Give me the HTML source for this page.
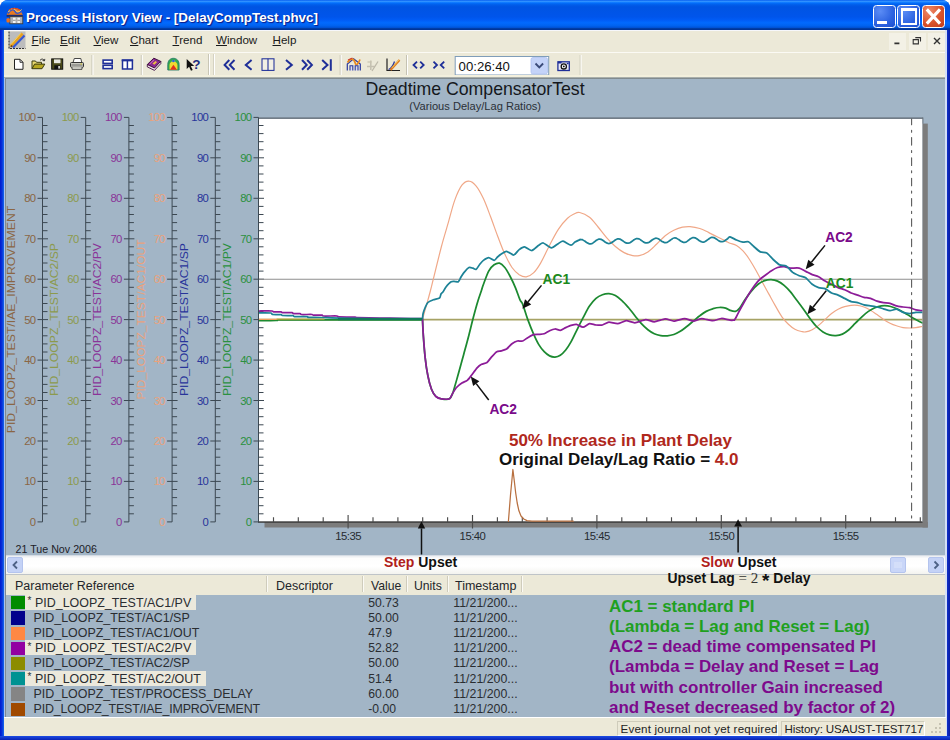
<!DOCTYPE html>
<html><head><meta charset="utf-8"><title>Process History View</title>
<style>
html,body{margin:0;padding:0;}
body{width:950px;height:740px;position:relative;overflow:hidden;background:#fff;font-family:"Liberation Sans",sans-serif;}
div{position:absolute;box-sizing:border-box;white-space:nowrap;}
#win{left:0;top:0;width:950px;height:740px;border-radius:8px 8px 0 0;overflow:hidden;background:linear-gradient(to right,#0019cf 0,#0831d9 2px,#166aee 4px,#166aee 946px,#0831d9 948px,#001ea0 950px);}
#title{left:0;top:0;width:950px;height:30.3px;background:linear-gradient(to bottom,#0058ee 0%,#3593ff 4%,#288eff 6%,#127dff 8%,#036ffc 10%,#0262ee 14%,#0057e5 20%,#0054e3 24%,#0055eb 56%,#005bf5 66%,#026afe 76%,#0062ef 86%,#0052d6 92%,#0040ab 94%,#003092 100%);}
#ttext{left:26px;top:9.5px;font-weight:bold;font-size:13.4px;color:#fff;letter-spacing:0px;text-shadow:1px 1px 1px #0a1883;}
.cap{top:5px;width:22.8px;height:22.8px;border-radius:3.5px;border:1px solid #fff;}
#bmin,#bmax{background:radial-gradient(circle at 30% 25%,#5b8cf5 0%,#2c62e0 60%,#1d4fcf 100%);}
#bclose{background:radial-gradient(circle at 30% 25%,#ee8a6a 0%,#d9532c 55%,#c23d1b 100%);}
#menubar{left:4px;top:30.3px;width:942px;height:21.7px;background:#ece9d8;border-top:1.2px solid #f6f7fb;}
.mi{top:32.9px;font-size:11.6px;color:#1a1a1a;}
.mi u{text-decoration:underline;}
#toolbar{left:4px;top:52px;width:942px;height:26px;background:#ece9d8;border-top:1px solid #fbfaf4;}
#tbline{left:4px;top:75px;width:942px;height:4.2px;background:linear-gradient(to bottom,#f3f0dd 0,#f3f0dd 2.3px,#858f92 2.6px,#7f898e 3.9px,#a2b5c6 4.2px);}
#chart{left:6px;top:79px;width:939px;height:477px;background:#a2b5c6;}
#lgrey{left:3.9px;top:78px;width:2.1px;height:639.2px;background:linear-gradient(to right,#a9c2ee 0,#a9c2ee 0.7px,#808a92 0.9px);}
#scroll{left:6px;top:555px;width:939px;height:18.5px;background:linear-gradient(to bottom,#c9d2dc 0,#eef0f3 1.5px,#fdfdfd 3.5px,#fff 60%,#f3f3ef 100%);}
.sbtn{top:557px;width:16px;height:16px;background:#c4d2f6;border:1px solid #b4c4ee;border-radius:2px;}
#thead{left:6px;top:573.5px;width:939px;height:21px;background:#ece9d8;border-top:1px solid #bfc4c8;}
.th{top:578.5px;font-size:12.5px;color:#23262a;}
.sep{top:576px;height:16px;background:#cfccbc;border-right:1px solid #fbfaf5;width:2px;}
#tbody{left:6px;top:594.5px;width:939px;height:122.8px;background:#a2b5c6;}
.sw{left:10.8px;width:14px;height:13.3px;margin-top:0.9px;}
.nm,.hl,.vl,.ts{font-size:12.45px;color:#2a2d31;height:15.2px;line-height:17px;overflow:visible;}
.nm{left:33.5px;}
.hl{left:25px;background:#ece9dc;padding:0 5px 0 10px;}
.ast{position:absolute;left:2.5px;top:-2.5px;font-size:10px;}
.vl{left:368.3px;font-size:12.2px;}
.ts{left:453.3px;font-size:12.35px;letter-spacing:0;}
#status{left:4px;top:717.2px;width:942px;height:19.5px;background:#ece9d8;border-top:1px solid #fff;}
.sbx{top:720.6px;height:15px;border:1px solid #cfccbb;border-right-color:#fff;border-bottom-color:#fff;font-size:11.6px;color:#222;line-height:13px;padding-left:3px;}
.ann{font-weight:bold;font-size:16.95px;left:609px;}
.g{color:#1fa01f;} .p{color:#7d0a8c;}
</style></head><body>
<div id="win">
<div id="title"></div>
<svg style="position:absolute;left:6px;top:7px" width="18" height="18" viewBox="0 0 18 18">
 <path d="M0.6,8 L3,2.5 Q8.5,-1 14,2.5 L16.8,8Z" fill="#e87a22"/>
 <path d="M2,6.5 C5,1.5 8,2 9,4.5 S13,7 16,3.5" stroke="#3858c8" stroke-width="1.5" fill="none"/>
 <path d="M2.5,5 C5,0.8 8,1 9.5,3.2 S13,5.5 15.5,2.5" stroke="#f8d870" stroke-width="1" fill="none"/>
 <path d="M3,3 Q8.5,-0.3 14,3" stroke="#d04028" stroke-width="1" fill="none"/>
 <rect x="0.6" y="7.8" width="16.2" height="2" fill="#1c2c70"/>
 <rect x="3.8" y="9.6" width="13" height="7.2" fill="#aeb0b4" stroke="#3c3c3c" stroke-width="0.9"/>
 <rect x="7" y="10.8" width="2.6" height="5.2" fill="#f4f4f4"/><rect x="11.4" y="10.8" width="2.6" height="5.2" fill="#f0f0f0"/>
 <path d="M7,13.300h2.600M11.4,13.300h2.6" stroke="#666" stroke-width="0.7"/>
 <rect x="0.5" y="11.2" width="3.3" height="4.2" rx="1" fill="#f07018"/>
</svg>
<div id="ttext">Process History View - [DelayCompTest.phvc]</div>
<div class="cap" id="bmin" style="left:872.8px"><div style="left:3.6px;top:15.2px;width:9.5px;height:3.2px;background:#fff"></div></div>
<div class="cap" id="bmax" style="left:897.4px"><div style="left:2.3px;top:2.2px;width:16.4px;height:16.4px;border:2.2px solid #fff;border-top-width:3.6px"></div></div>
<div class="cap" id="bclose" style="left:922.4px"><svg width="21" height="21" viewBox="0 0 21 21" style="position:absolute;left:0;top:0"><path d="M3.8,3.4L17,17.6M17,3.4L3.8,17.6" stroke="#fff" stroke-width="3.1" stroke-linecap="butt"/></svg></div>

<div id="menubar"></div>
<svg style="position:absolute;left:7.500px;top:31.300px" width="18" height="19" viewBox="0 0 18 19">
 <rect x="1" y="0.500" width="16.500" height="17" fill="#bcbcbc"/>
 <path d="M1,0.500V17.500H17.500" stroke="#333" stroke-width="1.100" fill="none" stroke-dasharray="2,1"/>
 <path d="M2.500,15.500L14.500,2.500" stroke="#e8a020" stroke-width="3.200"/>
 <path d="M3,13.500L13,2.200" stroke="#f4d860" stroke-width="1"/>
 <path d="M5,16.500L16.500,4.500" stroke="#3858d0" stroke-width="2.200"/>
 <path d="M2.200,16.200l1.500-2.300l1,1.300z" fill="#402010"/>
</svg>
<div class="mi" style="left:31.6px"><u>F</u>ile</div>
<div class="mi" style="left:60px"><u>E</u>dit</div>
<div class="mi" style="left:93.5px"><u>V</u>iew</div>
<div class="mi" style="left:130px"><u>C</u>hart</div>
<div class="mi" style="left:172.5px"><u>T</u>rend</div>
<div class="mi" style="left:216px"><u>W</u>indow</div>
<div class="mi" style="left:272.5px"><u>H</u>elp</div>
<svg style="position:absolute;left:885px;top:32px" width="60" height="18" viewBox="885 32 60 18">
 <rect x="889" y="33" width="17" height="17" fill="#f3f1e6"/><rect x="909" y="33" width="17" height="17" fill="#f3f1e6"/><rect x="928" y="33" width="17" height="17" fill="#f3f1e6"/>
 <path d="M894.4,43.3h5" stroke="#333" stroke-width="1.7"/>
 <path d="M915.3,37.6h5.2v4M913.2,39.6h5.2v4.3h-5.2z" stroke="#333" stroke-width="1.1" fill="none"/>
 <path d="M934,38l6,6M940,38l-6,6" stroke="#333" stroke-width="1.4"/>
</svg>

<div id="toolbar"></div>
<svg style="position:absolute;left:0;top:52px" width="950" height="26" viewBox="0 52 950 26"><path d="M14.5,59.300h5.500l3,3v7h-8.500z" fill="#fff" stroke="#222" stroke-width="1"/><path d="M20,59.300v3h3" fill="none" stroke="#222" stroke-width="0.900"/><path d="M32,68.700v-7.700h3.500l1,1.300h5v1.800" fill="#e8d870" stroke="#3a3a10" stroke-width="1"/><path d="M32,68.700l2.600-4.600h10.200l-2.800,4.600z" fill="#b8a820" stroke="#3a3a10" stroke-width="1"/><path d="M40,60.300c1.600-1.800,3.400-1.500,4.300,0.200m0.200,0.300l0.300-1.900m-0.300,1.900l-1.900-0.300" stroke="#222" stroke-width="0.900" fill="none"/><rect x="51.700" y="58.900" width="11" height="10.300" fill="#4a4a18" stroke="#111" stroke-width="1"/><rect x="54" y="59.400" width="6.500" height="3.800" fill="#e8e8e0"/><rect x="54.300" y="65.300" width="6" height="3.900" fill="#111"/><rect x="58.300" y="66" width="1.600" height="2.600" fill="#e8e8e0"/><path d="M73,62.500l1.300-4h6.500l1,4" fill="#fff" stroke="#333" stroke-width="0.900"/><rect x="70.500" y="62.500" width="13" height="4.800" rx="1" fill="#c8c8c0" stroke="#333" stroke-width="1"/><path d="M72,67.300v2h10v-2" fill="#e8e8e0" stroke="#333" stroke-width="0.900"/><path d="M71.500,65h11" stroke="#555" stroke-width="0.800"/><rect x="80.500" y="63.500" width="1.500" height="1" fill="#e0d020"/><path d="M92,55v20" stroke="#c5c2b2" stroke-width="1"/><path d="M93,55v20" stroke="#fff" stroke-width="1"/><path d="M141.3,55v20" stroke="#c5c2b2" stroke-width="1"/><path d="M142.3,55v20" stroke="#fff" stroke-width="1"/><path d="M340.2,55v20" stroke="#c5c2b2" stroke-width="1"/><path d="M341.2,55v20" stroke="#fff" stroke-width="1"/><path d="M406.5,55v20" stroke="#c5c2b2" stroke-width="1"/><path d="M407.5,55v20" stroke="#fff" stroke-width="1"/><path d="M208.500,54v22" stroke="#c9c6b6" stroke-width="1"/><path d="M209.500,54v22" stroke="#fff" stroke-width="1"/><path d="M213.500,54v22" stroke="#d5d2c2" stroke-width="1"/><path d="M214.500,54v22" stroke="#fff" stroke-width="1"/><path d="M581,55v20" stroke="#fff" stroke-width="1.200"/><path d="M580,55v20" stroke="#d5d2c2" stroke-width="1"/><rect x="103.100" y="60.100" width="9.100" height="3.300" fill="#fff" stroke="#1f2f98" stroke-width="1.600"/><rect x="103.100" y="65.300" width="9.100" height="3.300" fill="#fff" stroke="#1f2f98" stroke-width="1.600"/><rect x="122.500" y="60.400" width="9.900" height="8.600" fill="#fff" stroke="#1f2f98" stroke-width="1.500"/><path d="M121.700,60.200h11.400" stroke="#1f2f98" stroke-width="1.900"/><path d="M127.400,60.400v8.600" stroke="#1f2f98" stroke-width="1.500"/><path d="M147.300,64.500l6.500-6.300l7,3.200l-6.300,6.800z" fill="#8a2a90" stroke="#401040" stroke-width="1"/><path d="M147.300,64.500v2.400l7.200,3.500l6.300-6.800v-2.400l-6.300,6.800z" fill="#f0e0e8" stroke="#401040" stroke-width="0.900"/><path d="M152.500,63.500l3-2.500l1.500,1.200l-2.800,2.600z" fill="#f0c040"/><path d="M149.500,64.300l4.300-4.300" stroke="#d070c0" stroke-width="1"/><path d="M167.800,70v-5.500c0-4,2.600-6.200,5.600-6.200s5.700,2.200,5.700,6.200v5.500z" fill="#30a850" stroke="#2a7a6a" stroke-width="0.900"/><path d="M169.500,69.600v-4.600c0-2,1.700-3.800,3.900-3.800s4,1.800,4,3.800v4.600z" fill="#f0d830"/><path d="M170,69.800l3.400-5l3.600,5z" fill="#e03020"/><path d="M171.500,61.500a2.200,2.200 0 0 1 4,0z" fill="#70c8e8"/><circle cx="173.400" cy="61" r="1.200" fill="#3060d0"/><path d="M186.700,58.900v10l2.400-2.200l1.900,4l1.700-0.800l-1.900-4h3.400z" fill="#111"/><text x="192.300" y="68.600" font-family="Liberation Sans, sans-serif" font-weight="bold" font-size="13.500" fill="#1a2a80">?</text><path d="M229.300,60l-4.700,4.900l4.700,4.900M234.500,60l-4.700,4.900l4.700,4.900" stroke="#1f2f98" stroke-width="2" fill="none"/><path d="M251.600,60l-5.800,4.900l5.800,4.900" stroke="#1f2f98" stroke-width="2" fill="none"/><rect x="262" y="58.800" width="12" height="11.600" fill="#f1efe4" stroke="#1f2f98" stroke-width="1.050"/><path d="M268,58.800v11.600" stroke="#1f2f98" stroke-width="1.100"/><path d="M286,60l5.800,4.900l-5.800,4.900" stroke="#1f2f98" stroke-width="2" fill="none"/><path d="M302,60l4.700,4.900l-4.700,4.900M307.200,60l4.700,4.900l-4.700,4.900" stroke="#1f2f98" stroke-width="2" fill="none"/><path d="M322.200,60l5.300,4.900l-5.300,4.900M330.800,59.300v11.400" stroke="#1f2f98" stroke-width="2" fill="none"/><path d="M347.300,70.500v-6.500l6.300-5.200l6.700,5.200v6.500" fill="none" stroke="#2a3aa0" stroke-width="1.200"/><path d="M347.500,62.500c3-5,6.500-4,7.500,0s3,2,5-3" stroke="#e88a20" stroke-width="1.700" fill="none"/><path d="M350,70.500v-4.800h2.800v4.800m2.400,0v-4.800h2.800v4.800" stroke="#2a3aa0" stroke-width="1.100" fill="#dde"/><path d="M348,60l4.500-2" stroke="#d04030" stroke-width="1.200"/><path d="M367,66.500h7.500M370.800,60.500v9.500" stroke="#c4c0b0" stroke-width="1.500"/><path d="M372,71l6-9.500" stroke="#bcb8a8" stroke-width="1.300"/><path d="M367.500,62h4" stroke="#c8c4b0" stroke-width="1.200"/><path d="M387,58.500v12h13" stroke="#222" stroke-width="1.200" fill="none"/><path d="M388.500,69.500c3-1,5-5,6-8" stroke="#2a3aa0" stroke-width="1.300" fill="none"/><path d="M390.500,70l9-10" stroke="#e07a20" stroke-width="2.200"/><path d="M392,67.800l7-8" stroke="#f4d060" stroke-width="0.900"/><path d="M417,61.600l-3.500,3.400l3.500,3.400M420.200,61.600l3.500,3.400l-3.500,3.400" stroke="#1f2f98" stroke-width="1.800" fill="none"/><path d="M433.500,61.600l3.500,3.400l-3.500,3.400M444.200,61.600l-3.500,3.400l3.500,3.400" stroke="#1f2f98" stroke-width="1.800" fill="none"/><rect x="455.200" y="56.500" width="93.500" height="18.500" fill="#fff" stroke="#7f9db9" stroke-width="1"/><rect x="531" y="57.500" width="16.500" height="16.500" rx="2" fill="#c4d3f8" stroke="#b0c2f0" stroke-width="0.800"/><path d="M535.500,63.500l3.800,3.800l3.800-3.800" stroke="#3a4a78" stroke-width="1.900" fill="none"/><text x="458.600" y="71" font-family="Liberation Sans, sans-serif" font-size="13.200" fill="#111">00:26:40</text><rect x="557.900" y="61.800" width="11.400" height="8.700" fill="#e8e8f4" stroke="#1f2f98" stroke-width="1.300"/><circle cx="563.800" cy="66.400" r="2.600" fill="#fff" stroke="#111" stroke-width="1.300"/><circle cx="563.800" cy="66.400" r="0.900" fill="#111"/><path d="M558,62.500h3.600" stroke="#1f2f98" stroke-width="2"/><rect x="566.800" y="62.800" width="1.800" height="1.400" fill="#1f2f98"/></svg>
<div id="tbline"></div>
<div id="lgrey"></div>
<div style="left:944.8px;top:30px;width:2.3px;height:706.5px;background:#d4dff7"></div><div style="left:947px;top:30px;width:3px;height:710px;background:linear-gradient(to right,#1030c8,#0a1ca4)"></div>
<div id="chart"></div>
<div id="scroll"></div>
<div class="sbtn" style="left:7px"></div>
<div class="sbtn" style="left:928px"></div>
<div class="sbtn" style="left:890px;background:#c9d6f8"></div>
<svg style="position:absolute;left:0;top:556px" width="950" height="18" viewBox="0 556 950 18">
 <path d="M17,561.5l-3.5,3.5l3.5,3.5" stroke="#4d6185" stroke-width="1.8" fill="none"/>
 <path d="M934.5,561.5l3.5,3.5l-3.5,3.5" stroke="#4d6185" stroke-width="1.8" fill="none"/>
 <path d="M895,562v6M897,562v6M899,562v6M901,562v6" stroke="#dfe7fb" stroke-width="1"/>
</svg>
<div id="thead"></div>
<div class="th" style="left:15px">Parameter Reference</div>
<div class="th" style="left:276px">Descriptor</div>
<div class="th" style="left:371px;font-size:12.2px">Value</div>
<div class="th" style="left:414px;font-size:12.2px">Units</div>
<div class="th" style="left:455px">Timestamp</div>
<div class="sep" style="left:266px"></div><div class="sep" style="left:361.5px"></div><div class="sep" style="left:405.5px"></div><div class="sep" style="left:447px"></div><div class="sep" style="left:521px"></div>
<div id="tbody"></div>
<div class="sw" style="top:595.3px;background:#008c00"></div><div class="hl" style="top:594.5px"><span class="ast">*</span>PID_LOOPZ_TEST/AC1/PV</div><div class="vl" style="top:594.5px">50.73</div><div class="ts" style="top:594.5px">11/21/200...</div><div class="sw" style="top:610.5px;background:#00008c"></div><div class="nm" style="top:609.7px">PID_LOOPZ_TEST/AC1/SP</div><div class="vl" style="top:609.7px">50.00</div><div class="ts" style="top:609.7px">11/21/200...</div><div class="sw" style="top:625.7px;background:#ff8844"></div><div class="nm" style="top:624.9px">PID_LOOPZ_TEST/AC1/OUT</div><div class="vl" style="top:624.9px">47.9</div><div class="ts" style="top:624.9px">11/21/200...</div><div class="sw" style="top:640.9px;background:#9200a2"></div><div class="hl" style="top:640.1px"><span class="ast">*</span>PID_LOOPZ_TEST/AC2/PV</div><div class="vl" style="top:640.1px">52.82</div><div class="ts" style="top:640.1px">11/21/200...</div><div class="sw" style="top:656.1px;background:#8c8c00"></div><div class="nm" style="top:655.3px">PID_LOOPZ_TEST/AC2/SP</div><div class="vl" style="top:655.3px">50.00</div><div class="ts" style="top:655.3px">11/21/200...</div><div class="sw" style="top:671.3px;background:#009292"></div><div class="hl" style="top:670.5px"><span class="ast">*</span>PID_LOOPZ_TEST/AC2/OUT</div><div class="vl" style="top:670.5px">51.4</div><div class="ts" style="top:670.5px">11/21/200...</div><div class="sw" style="top:686.5px;background:#858585"></div><div class="nm" style="top:685.7px">PID_LOOPZ_TEST/PROCESS_DELAY</div><div class="vl" style="top:685.7px">60.00</div><div class="ts" style="top:685.7px">11/21/200...</div><div class="sw" style="top:701.7px;background:#a04a00"></div><div class="nm" style="top:700.9px;letter-spacing:-0.17px">PID_LOOPZ_TEST/IAE_IMPROVEMENT</div><div class="vl" style="top:700.9px">-0.00</div><div class="ts" style="top:700.9px">11/21/200...</div>
<div id="status"></div>
<div style="left:0;top:736.4px;width:950px;height:3.6px;background:linear-gradient(to bottom,#1c4ce4,#0a22b4)"></div>
<div class="sbx" style="left:616.5px;width:161.5px;letter-spacing:0.19px">Event journal not yet required</div>
<div class="sbx" style="left:780.5px;width:144.8px;letter-spacing:-0.13px">History: USAUST-TEST717</div>
<svg style="position:absolute;left:930px;top:722px" width="14" height="14" viewBox="0 0 14 14"><g fill="#c6c3b2"><rect x="9" y="9" width="2" height="2"/><rect x="5" y="9" width="2" height="2"/><rect x="9" y="5" width="2" height="2"/><rect x="1" y="9" width="2" height="2"/><rect x="5" y="5" width="2" height="2"/><rect x="9" y="1" width="2" height="2"/></g></svg>

<svg width="950" height="740" viewBox="0 0 950 740" style="position:absolute;left:0;top:0" font-family="Liberation Sans, sans-serif">
<rect x="259" y="118.5" width="663.5" height="403.5" fill="#ffffff"/>
<rect x="922.5" y="123.6" width="5.3" height="403.9" fill="#7c7c7c"/>
<rect x="264.5" y="522" width="663.3" height="5.5" fill="#7c7c7c"/><rect x="258" y="521.3" width="664.5" height="1.5" fill="#3c3c3c"/>
<rect x="259" y="117.5" width="664" height="1.3" fill="#5d6770"/><rect x="922.4" y="117.5" width="1" height="6.2" fill="#6a747c"/>
<path d="M42.5,117.4V521.9M37.5,521.9H42.5M42.5,513.8H47.5M42.5,505.7H47.5M42.5,497.6H47.5M42.5,489.5H47.5M37.5,481.4H48.0M42.5,473.4H47.5M42.5,465.3H47.5M42.5,457.2H47.5M42.5,449.1H47.5M37.5,441.0H48.0M42.5,432.9H47.5M42.5,424.8H47.5M42.5,416.7H47.5M42.5,408.6H47.5M37.5,400.5H48.0M42.5,392.5H47.5M42.5,384.4H47.5M42.5,376.3H47.5M42.5,368.2H47.5M37.5,360.1H48.0M42.5,352.0H47.5M42.5,343.9H47.5M42.5,335.8H47.5M42.5,327.7H47.5M37.5,319.6H48.0M42.5,311.6H47.5M42.5,303.5H47.5M42.5,295.4H47.5M42.5,287.3H47.5M37.5,279.2H48.0M42.5,271.1H47.5M42.5,263.0H47.5M42.5,254.9H47.5M42.5,246.8H47.5M37.5,238.8H48.0M42.5,230.7H47.5M42.5,222.6H47.5M42.5,214.5H47.5M42.5,206.4H47.5M37.5,198.3H48.0M42.5,190.2H47.5M42.5,182.1H47.5M42.5,174.0H47.5M42.5,165.9H47.5M37.5,157.8H48.0M42.5,149.8H47.5M42.5,141.7H47.5M42.5,133.6H47.5M42.5,125.5H47.5M37.5,117.4H42.5" stroke="#3c4852" stroke-width="1" fill="none"/>
<text x="35.3" y="525.9" font-size="11.3" text-anchor="end" fill="#8a6644" letter-spacing="-0.7">0</text>
<text x="35.3" y="485.4" font-size="11.3" text-anchor="end" fill="#8a6644" letter-spacing="-0.7">10</text>
<text x="35.3" y="445.0" font-size="11.3" text-anchor="end" fill="#8a6644" letter-spacing="-0.7">20</text>
<text x="35.3" y="404.5" font-size="11.3" text-anchor="end" fill="#8a6644" letter-spacing="-0.7">30</text>
<text x="35.3" y="364.1" font-size="11.3" text-anchor="end" fill="#8a6644" letter-spacing="-0.7">40</text>
<text x="35.3" y="323.6" font-size="11.3" text-anchor="end" fill="#8a6644" letter-spacing="-0.7">50</text>
<text x="35.3" y="283.2" font-size="11.3" text-anchor="end" fill="#8a6644" letter-spacing="-0.7">60</text>
<text x="35.3" y="242.8" font-size="11.3" text-anchor="end" fill="#8a6644" letter-spacing="-0.7">70</text>
<text x="35.3" y="202.3" font-size="11.3" text-anchor="end" fill="#8a6644" letter-spacing="-0.7">80</text>
<text x="35.3" y="161.8" font-size="11.3" text-anchor="end" fill="#8a6644" letter-spacing="-0.7">90</text>
<text x="35.3" y="121.4" font-size="11.3" text-anchor="end" fill="#8a6644" letter-spacing="-0.7">100</text>
<text transform="translate(14.9,319.5) rotate(-90)" font-size="11.3" text-anchor="middle" fill="#8a6644" textLength="227.5" lengthAdjust="spacingAndGlyphs">PID_LOOPZ_TEST/IAE_IMPROVEMENT</text>
<path d="M85.7,117.4V521.9M80.7,521.9H85.7M85.7,513.8H90.7M85.7,505.7H90.7M85.7,497.6H90.7M85.7,489.5H90.7M80.7,481.4H91.2M85.7,473.4H90.7M85.7,465.3H90.7M85.7,457.2H90.7M85.7,449.1H90.7M80.7,441.0H91.2M85.7,432.9H90.7M85.7,424.8H90.7M85.7,416.7H90.7M85.7,408.6H90.7M80.7,400.5H91.2M85.7,392.5H90.7M85.7,384.4H90.7M85.7,376.3H90.7M85.7,368.2H90.7M80.7,360.1H91.2M85.7,352.0H90.7M85.7,343.9H90.7M85.7,335.8H90.7M85.7,327.7H90.7M80.7,319.6H91.2M85.7,311.6H90.7M85.7,303.5H90.7M85.7,295.4H90.7M85.7,287.3H90.7M80.7,279.2H91.2M85.7,271.1H90.7M85.7,263.0H90.7M85.7,254.9H90.7M85.7,246.8H90.7M80.7,238.8H91.2M85.7,230.7H90.7M85.7,222.6H90.7M85.7,214.5H90.7M85.7,206.4H90.7M80.7,198.3H91.2M85.7,190.2H90.7M85.7,182.1H90.7M85.7,174.0H90.7M85.7,165.9H90.7M80.7,157.8H91.2M85.7,149.8H90.7M85.7,141.7H90.7M85.7,133.6H90.7M85.7,125.5H90.7M80.7,117.4H85.7" stroke="#3c4852" stroke-width="1" fill="none"/>
<text x="78.5" y="525.9" font-size="11.3" text-anchor="end" fill="#8c9a4c" letter-spacing="-0.7">0</text>
<text x="78.5" y="485.4" font-size="11.3" text-anchor="end" fill="#8c9a4c" letter-spacing="-0.7">10</text>
<text x="78.5" y="445.0" font-size="11.3" text-anchor="end" fill="#8c9a4c" letter-spacing="-0.7">20</text>
<text x="78.5" y="404.5" font-size="11.3" text-anchor="end" fill="#8c9a4c" letter-spacing="-0.7">30</text>
<text x="78.5" y="364.1" font-size="11.3" text-anchor="end" fill="#8c9a4c" letter-spacing="-0.7">40</text>
<text x="78.5" y="323.6" font-size="11.3" text-anchor="end" fill="#8c9a4c" letter-spacing="-0.7">50</text>
<text x="78.5" y="283.2" font-size="11.3" text-anchor="end" fill="#8c9a4c" letter-spacing="-0.7">60</text>
<text x="78.5" y="242.8" font-size="11.3" text-anchor="end" fill="#8c9a4c" letter-spacing="-0.7">70</text>
<text x="78.5" y="202.3" font-size="11.3" text-anchor="end" fill="#8c9a4c" letter-spacing="-0.7">80</text>
<text x="78.5" y="161.8" font-size="11.3" text-anchor="end" fill="#8c9a4c" letter-spacing="-0.7">90</text>
<text x="78.5" y="121.4" font-size="11.3" text-anchor="end" fill="#8c9a4c" letter-spacing="-0.7">100</text>
<text transform="translate(58.1,319.5) rotate(-90)" font-size="11.3" text-anchor="middle" fill="#8c9a4c" textLength="153" lengthAdjust="spacingAndGlyphs">PID_LOOPZ_TEST/AC2/SP</text>
<path d="M128.9,117.4V521.9M123.9,521.9H128.9M128.9,513.8H133.9M128.9,505.7H133.9M128.9,497.6H133.9M128.9,489.5H133.9M123.9,481.4H134.4M128.9,473.4H133.9M128.9,465.3H133.9M128.9,457.2H133.9M128.9,449.1H133.9M123.9,441.0H134.4M128.9,432.9H133.9M128.9,424.8H133.9M128.9,416.7H133.9M128.9,408.6H133.9M123.9,400.5H134.4M128.9,392.5H133.9M128.9,384.4H133.9M128.9,376.3H133.9M128.9,368.2H133.9M123.9,360.1H134.4M128.9,352.0H133.9M128.9,343.9H133.9M128.9,335.8H133.9M128.9,327.7H133.9M123.9,319.6H134.4M128.9,311.6H133.9M128.9,303.5H133.9M128.9,295.4H133.9M128.9,287.3H133.9M123.9,279.2H134.4M128.9,271.1H133.9M128.9,263.0H133.9M128.9,254.9H133.9M128.9,246.8H133.9M123.9,238.8H134.4M128.9,230.7H133.9M128.9,222.6H133.9M128.9,214.5H133.9M128.9,206.4H133.9M123.9,198.3H134.4M128.9,190.2H133.9M128.9,182.1H133.9M128.9,174.0H133.9M128.9,165.9H133.9M123.9,157.8H134.4M128.9,149.8H133.9M128.9,141.7H133.9M128.9,133.6H133.9M128.9,125.5H133.9M123.9,117.4H128.9" stroke="#3c4852" stroke-width="1" fill="none"/>
<text x="121.7" y="525.9" font-size="11.3" text-anchor="end" fill="#8a3498" letter-spacing="-0.7">0</text>
<text x="121.7" y="485.4" font-size="11.3" text-anchor="end" fill="#8a3498" letter-spacing="-0.7">10</text>
<text x="121.7" y="445.0" font-size="11.3" text-anchor="end" fill="#8a3498" letter-spacing="-0.7">20</text>
<text x="121.7" y="404.5" font-size="11.3" text-anchor="end" fill="#8a3498" letter-spacing="-0.7">30</text>
<text x="121.7" y="364.1" font-size="11.3" text-anchor="end" fill="#8a3498" letter-spacing="-0.7">40</text>
<text x="121.7" y="323.6" font-size="11.3" text-anchor="end" fill="#8a3498" letter-spacing="-0.7">50</text>
<text x="121.7" y="283.2" font-size="11.3" text-anchor="end" fill="#8a3498" letter-spacing="-0.7">60</text>
<text x="121.7" y="242.8" font-size="11.3" text-anchor="end" fill="#8a3498" letter-spacing="-0.7">70</text>
<text x="121.7" y="202.3" font-size="11.3" text-anchor="end" fill="#8a3498" letter-spacing="-0.7">80</text>
<text x="121.7" y="161.8" font-size="11.3" text-anchor="end" fill="#8a3498" letter-spacing="-0.7">90</text>
<text x="121.7" y="121.4" font-size="11.3" text-anchor="end" fill="#8a3498" letter-spacing="-0.7">100</text>
<text transform="translate(101.3,319.5) rotate(-90)" font-size="11.3" text-anchor="middle" fill="#8a3498" textLength="153" lengthAdjust="spacingAndGlyphs">PID_LOOPZ_TEST/AC2/PV</text>
<path d="M172.1,117.4V521.9M167.1,521.9H172.1M172.1,513.8H177.1M172.1,505.7H177.1M172.1,497.6H177.1M172.1,489.5H177.1M167.1,481.4H177.6M172.1,473.4H177.1M172.1,465.3H177.1M172.1,457.2H177.1M172.1,449.1H177.1M167.1,441.0H177.6M172.1,432.9H177.1M172.1,424.8H177.1M172.1,416.7H177.1M172.1,408.6H177.1M167.1,400.5H177.6M172.1,392.5H177.1M172.1,384.4H177.1M172.1,376.3H177.1M172.1,368.2H177.1M167.1,360.1H177.6M172.1,352.0H177.1M172.1,343.9H177.1M172.1,335.8H177.1M172.1,327.7H177.1M167.1,319.6H177.6M172.1,311.6H177.1M172.1,303.5H177.1M172.1,295.4H177.1M172.1,287.3H177.1M167.1,279.2H177.6M172.1,271.1H177.1M172.1,263.0H177.1M172.1,254.9H177.1M172.1,246.8H177.1M167.1,238.8H177.6M172.1,230.7H177.1M172.1,222.6H177.1M172.1,214.5H177.1M172.1,206.4H177.1M167.1,198.3H177.6M172.1,190.2H177.1M172.1,182.1H177.1M172.1,174.0H177.1M172.1,165.9H177.1M167.1,157.8H177.6M172.1,149.8H177.1M172.1,141.7H177.1M172.1,133.6H177.1M172.1,125.5H177.1M167.1,117.4H172.1" stroke="#3c4852" stroke-width="1" fill="none"/>
<text x="164.9" y="525.9" font-size="11.3" text-anchor="end" fill="#eba27c" letter-spacing="-0.7">0</text>
<text x="164.9" y="485.4" font-size="11.3" text-anchor="end" fill="#eba27c" letter-spacing="-0.7">10</text>
<text x="164.9" y="445.0" font-size="11.3" text-anchor="end" fill="#eba27c" letter-spacing="-0.7">20</text>
<text x="164.9" y="404.5" font-size="11.3" text-anchor="end" fill="#eba27c" letter-spacing="-0.7">30</text>
<text x="164.9" y="364.1" font-size="11.3" text-anchor="end" fill="#eba27c" letter-spacing="-0.7">40</text>
<text x="164.9" y="323.6" font-size="11.3" text-anchor="end" fill="#eba27c" letter-spacing="-0.7">50</text>
<text x="164.9" y="283.2" font-size="11.3" text-anchor="end" fill="#eba27c" letter-spacing="-0.7">60</text>
<text x="164.9" y="242.8" font-size="11.3" text-anchor="end" fill="#eba27c" letter-spacing="-0.7">70</text>
<text x="164.9" y="202.3" font-size="11.3" text-anchor="end" fill="#eba27c" letter-spacing="-0.7">80</text>
<text x="164.9" y="161.8" font-size="11.3" text-anchor="end" fill="#eba27c" letter-spacing="-0.7">90</text>
<text x="164.9" y="121.4" font-size="11.3" text-anchor="end" fill="#eba27c" letter-spacing="-0.7">100</text>
<text transform="translate(144.5,319.5) rotate(-90)" font-size="11.3" text-anchor="middle" fill="#eba27c" textLength="160" lengthAdjust="spacingAndGlyphs">PID_LOOPZ_TEST/AC1/OUT</text>
<path d="M215.3,117.4V521.9M210.3,521.9H215.3M215.3,513.8H220.3M215.3,505.7H220.3M215.3,497.6H220.3M215.3,489.5H220.3M210.3,481.4H220.8M215.3,473.4H220.3M215.3,465.3H220.3M215.3,457.2H220.3M215.3,449.1H220.3M210.3,441.0H220.8M215.3,432.9H220.3M215.3,424.8H220.3M215.3,416.7H220.3M215.3,408.6H220.3M210.3,400.5H220.8M215.3,392.5H220.3M215.3,384.4H220.3M215.3,376.3H220.3M215.3,368.2H220.3M210.3,360.1H220.8M215.3,352.0H220.3M215.3,343.9H220.3M215.3,335.8H220.3M215.3,327.7H220.3M210.3,319.6H220.8M215.3,311.6H220.3M215.3,303.5H220.3M215.3,295.4H220.3M215.3,287.3H220.3M210.3,279.2H220.8M215.3,271.1H220.3M215.3,263.0H220.3M215.3,254.9H220.3M215.3,246.8H220.3M210.3,238.8H220.8M215.3,230.7H220.3M215.3,222.6H220.3M215.3,214.5H220.3M215.3,206.4H220.3M210.3,198.3H220.8M215.3,190.2H220.3M215.3,182.1H220.3M215.3,174.0H220.3M215.3,165.9H220.3M210.3,157.8H220.8M215.3,149.8H220.3M215.3,141.7H220.3M215.3,133.6H220.3M215.3,125.5H220.3M210.3,117.4H215.3" stroke="#3c4852" stroke-width="1" fill="none"/>
<text x="208.10000000000002" y="525.9" font-size="11.3" text-anchor="end" fill="#28349a" letter-spacing="-0.7">0</text>
<text x="208.10000000000002" y="485.4" font-size="11.3" text-anchor="end" fill="#28349a" letter-spacing="-0.7">10</text>
<text x="208.10000000000002" y="445.0" font-size="11.3" text-anchor="end" fill="#28349a" letter-spacing="-0.7">20</text>
<text x="208.10000000000002" y="404.5" font-size="11.3" text-anchor="end" fill="#28349a" letter-spacing="-0.7">30</text>
<text x="208.10000000000002" y="364.1" font-size="11.3" text-anchor="end" fill="#28349a" letter-spacing="-0.7">40</text>
<text x="208.10000000000002" y="323.6" font-size="11.3" text-anchor="end" fill="#28349a" letter-spacing="-0.7">50</text>
<text x="208.10000000000002" y="283.2" font-size="11.3" text-anchor="end" fill="#28349a" letter-spacing="-0.7">60</text>
<text x="208.10000000000002" y="242.8" font-size="11.3" text-anchor="end" fill="#28349a" letter-spacing="-0.7">70</text>
<text x="208.10000000000002" y="202.3" font-size="11.3" text-anchor="end" fill="#28349a" letter-spacing="-0.7">80</text>
<text x="208.10000000000002" y="161.8" font-size="11.3" text-anchor="end" fill="#28349a" letter-spacing="-0.7">90</text>
<text x="208.10000000000002" y="121.4" font-size="11.3" text-anchor="end" fill="#28349a" letter-spacing="-0.7">100</text>
<text transform="translate(187.7,319.5) rotate(-90)" font-size="11.3" text-anchor="middle" fill="#28349a" textLength="153" lengthAdjust="spacingAndGlyphs">PID_LOOPZ_TEST/AC1/SP</text>
<path d="M258.5,117.4V521.9M253.5,521.9H258.5M258.5,513.8H263.5M258.5,505.7H263.5M258.5,497.6H263.5M258.5,489.5H263.5M253.5,481.4H264.0M258.5,473.4H263.5M258.5,465.3H263.5M258.5,457.2H263.5M258.5,449.1H263.5M253.5,441.0H264.0M258.5,432.9H263.5M258.5,424.8H263.5M258.5,416.7H263.5M258.5,408.6H263.5M253.5,400.5H264.0M258.5,392.5H263.5M258.5,384.4H263.5M258.5,376.3H263.5M258.5,368.2H263.5M253.5,360.1H264.0M258.5,352.0H263.5M258.5,343.9H263.5M258.5,335.8H263.5M258.5,327.7H263.5M253.5,319.6H264.0M258.5,311.6H263.5M258.5,303.5H263.5M258.5,295.4H263.5M258.5,287.3H263.5M253.5,279.2H264.0M258.5,271.1H263.5M258.5,263.0H263.5M258.5,254.9H263.5M258.5,246.8H263.5M253.5,238.8H264.0M258.5,230.7H263.5M258.5,222.6H263.5M258.5,214.5H263.5M258.5,206.4H263.5M253.5,198.3H264.0M258.5,190.2H263.5M258.5,182.1H263.5M258.5,174.0H263.5M258.5,165.9H263.5M253.5,157.8H264.0M258.5,149.8H263.5M258.5,141.7H263.5M258.5,133.6H263.5M258.5,125.5H263.5M253.5,117.4H258.5" stroke="#3c4852" stroke-width="1" fill="none"/>
<text x="251.3" y="525.9" font-size="11.3" text-anchor="end" fill="#2a9040" letter-spacing="-0.7">0</text>
<text x="251.3" y="485.4" font-size="11.3" text-anchor="end" fill="#2a9040" letter-spacing="-0.7">10</text>
<text x="251.3" y="445.0" font-size="11.3" text-anchor="end" fill="#2a9040" letter-spacing="-0.7">20</text>
<text x="251.3" y="404.5" font-size="11.3" text-anchor="end" fill="#2a9040" letter-spacing="-0.7">30</text>
<text x="251.3" y="364.1" font-size="11.3" text-anchor="end" fill="#2a9040" letter-spacing="-0.7">40</text>
<text x="251.3" y="323.6" font-size="11.3" text-anchor="end" fill="#2a9040" letter-spacing="-0.7">50</text>
<text x="251.3" y="283.2" font-size="11.3" text-anchor="end" fill="#2a9040" letter-spacing="-0.7">60</text>
<text x="251.3" y="242.8" font-size="11.3" text-anchor="end" fill="#2a9040" letter-spacing="-0.7">70</text>
<text x="251.3" y="202.3" font-size="11.3" text-anchor="end" fill="#2a9040" letter-spacing="-0.7">80</text>
<text x="251.3" y="161.8" font-size="11.3" text-anchor="end" fill="#2a9040" letter-spacing="-0.7">90</text>
<text x="251.3" y="121.4" font-size="11.3" text-anchor="end" fill="#2a9040" letter-spacing="-0.7">100</text>
<text transform="translate(230.9,319.5) rotate(-90)" font-size="11.3" text-anchor="middle" fill="#2a9040" textLength="153" lengthAdjust="spacingAndGlyphs">PID_LOOPZ_TEST/AC1/PV</text>
<path d="M273.5,517.3V522M298.3,517.3V522M323.2,517.3V522M348.1,515V528.5M373.0,517.3V522M397.9,517.3V522M422.7,517.3V522M447.6,517.3V522M472.5,515V528.5M497.4,517.3V522M522.3,517.3V522M547.1,517.3V522M572.0,517.3V522M596.9,515V528.5M621.8,517.3V522M646.7,517.3V522M671.5,517.3V522M696.4,517.3V522M721.3,515V528.5M746.2,517.3V522M771.1,517.3V522M795.9,517.3V522M820.8,517.3V522M845.7,515V528.5M870.6,517.3V522M895.5,517.3V522M920.3,517.3V522" stroke="#4c4c4c" stroke-width="1.15" fill="none"/>
<text x="348.1" y="539.5" font-size="11.3" text-anchor="middle" fill="#262b30" letter-spacing="-0.5">15:35</text>
<text x="472.5" y="539.5" font-size="11.3" text-anchor="middle" fill="#262b30" letter-spacing="-0.5">15:40</text>
<text x="596.9" y="539.5" font-size="11.3" text-anchor="middle" fill="#262b30" letter-spacing="-0.5">15:45</text>
<text x="721.3" y="539.5" font-size="11.3" text-anchor="middle" fill="#262b30" letter-spacing="-0.5">15:50</text>
<text x="845.7" y="539.5" font-size="11.3" text-anchor="middle" fill="#262b30" letter-spacing="-0.5">15:55</text>
<clipPath id="pc"><rect x="259" y="118.5" width="663.5" height="403.5"/></clipPath>
<g clip-path="url(#pc)" fill="none" stroke-linejoin="round" stroke-linecap="round">
<path d="M259,279.2H922.5" stroke="#8e8e8e" stroke-width="1.050"/>
<path d="M259,319.6H922.5" stroke="#a6a264" stroke-width="1.7"/>
<path d="M508.4,521.5L510.5,495.0L512.9,469.5L514.3,481.0L515.7,493.0L517.2,503.0L518.9,510.8L521.0,516.0L523.8,519.0L527.0,520.6L531.9,521.2L573.3,521.2" stroke="#b87040" stroke-width="1.25"/>
<path d="M260.0,320.5C263.3,320.4 273.3,320.1 280.0,320.0C286.7,319.9 276.2,319.7 300.0,319.6C323.8,319.5 402.1,319.5 422.5,319.5C422.8,318.2 423.8,314.7 424.5,312.0C425.2,309.3 426.0,307.1 427.0,303.4C428.0,299.7 429.6,294.0 430.6,290.0C431.7,286.0 431.5,286.4 433.3,279.2C435.1,272.0 438.8,256.6 441.3,247.0C443.8,237.4 446.3,229.7 448.5,221.9C450.7,214.1 452.5,206.5 454.7,200.4C456.9,194.3 459.5,188.4 461.9,185.2C464.3,182.0 466.7,180.9 469.1,181.1C471.5,181.2 473.8,183.2 476.2,186.1C478.6,189.0 481.0,193.5 483.4,198.6C485.8,203.7 488.1,210.2 490.5,216.5C492.9,222.8 495.3,229.9 497.7,236.2C500.1,242.5 502.4,248.9 504.8,254.1C507.2,259.3 509.6,264.1 512.0,267.5C514.4,270.9 516.8,273.1 519.2,274.7C521.6,276.2 523.9,277.1 526.3,276.8C528.7,276.5 531.1,275.2 533.5,272.9C535.9,270.6 537.9,267.7 540.6,263.1C543.3,258.5 546.6,250.9 549.6,245.2C552.6,239.5 555.5,233.6 558.5,229.1C561.5,224.6 564.9,220.8 567.5,218.3C570.1,215.8 572.0,215.0 574.0,214.0C576.0,213.0 577.1,211.9 579.7,212.5C582.3,213.1 586.4,214.9 589.5,217.3C592.6,219.7 595.2,223.6 598.1,227.0C601.0,230.4 603.9,234.6 606.8,237.8C609.7,241.1 612.5,244.0 615.4,246.5C618.3,249.0 621.2,251.1 624.1,252.6C627.0,254.1 630.2,255.1 632.7,255.6C635.2,256.1 636.7,256.2 639.2,255.6C641.7,255.0 645.0,253.8 647.9,251.9C650.8,250.0 653.6,247.0 656.5,244.3C659.4,241.6 662.3,238.0 665.2,235.7C668.1,233.4 670.9,231.7 673.8,230.3C676.7,228.9 679.8,227.8 682.5,227.2C685.2,226.6 687.1,226.4 690.0,226.6C692.9,226.8 696.7,227.5 699.8,228.5C702.9,229.5 705.5,231.0 708.4,232.4C711.3,233.8 714.2,235.4 717.1,236.8C720.0,238.2 723.6,240.0 725.7,241.1C727.9,242.2 728.2,242.5 730.0,243.2C731.8,243.9 734.3,244.1 736.5,245.4C738.7,246.7 740.8,248.5 743.0,250.8C745.2,253.2 747.4,256.2 749.5,259.5C751.6,262.8 753.8,266.5 755.9,270.3C758.0,274.1 760.2,278.2 762.4,282.2C764.6,286.2 766.7,290.2 768.9,294.1C771.1,298.1 773.2,302.1 775.4,305.9C777.6,309.7 779.7,313.7 781.9,316.8C784.1,319.9 786.2,322.2 788.4,324.3C790.6,326.4 792.7,328.1 794.9,329.3C797.1,330.5 799.6,331.1 801.4,331.5C803.2,331.9 803.9,332.2 805.7,331.9C807.5,331.6 810.1,330.8 812.2,329.7C814.4,328.6 816.5,327.1 818.6,325.4C820.8,323.7 822.9,321.4 825.1,319.4C827.3,317.4 829.4,315.2 831.6,313.5C833.8,311.8 835.9,310.3 838.1,309.2C840.3,308.1 842.4,307.2 844.6,306.6C846.8,306.0 848.9,305.5 851.1,305.3C853.3,305.1 855.5,305.0 857.6,305.3C859.8,305.6 861.9,306.2 864.0,307.0C866.1,307.8 868.3,309.0 870.5,310.3C872.7,311.6 874.8,313.1 877.0,314.6C879.2,316.1 881.3,318.0 883.5,319.4C885.7,320.8 887.8,322.1 890.0,323.2C892.2,324.3 894.3,325.1 896.5,325.8C898.7,326.5 900.8,327.2 903.0,327.6C905.2,328.0 907.4,328.0 909.5,328.0C911.6,328.0 913.8,327.9 915.9,327.6C918.0,327.4 921.0,326.7 922.0,326.5" stroke="#f0a888" stroke-width="1.2"/>
<path d="M259.0,320.5C261.8,320.5 272.7,320.6 276.0,320.5C279.3,320.4 275.0,320.0 279.0,319.9C283.0,319.8 291.5,319.8 300.0,319.8C308.5,319.8 309.6,319.8 330.0,319.8C350.4,319.8 407.1,319.8 422.5,319.8C422.6,322.6 422.9,330.1 423.4,336.5C423.8,342.9 424.4,351.4 425.2,358.0C425.9,364.6 426.8,370.7 427.9,375.9C428.9,381.1 430.2,385.9 431.5,389.3C432.8,392.7 434.3,394.9 435.9,396.5C437.5,398.1 439.1,398.4 441.3,398.8C443.6,399.2 447.4,399.9 449.4,398.8C451.3,397.8 452.4,393.6 453.0,392.5C453.9,389.4 456.5,380.5 458.3,374.1C460.1,367.8 461.9,361.0 463.7,354.4C465.5,347.8 467.4,341.0 469.0,334.7C470.6,328.4 472.0,322.5 473.5,316.8C475.0,311.1 476.6,305.2 478.0,300.7C479.4,296.2 480.7,292.7 481.6,290.0C482.5,287.3 482.2,287.6 483.4,284.5C484.6,281.4 486.9,274.4 488.7,271.1C490.5,267.8 492.3,266.1 494.1,264.8C495.9,263.5 497.7,262.7 499.5,263.1C501.3,263.6 503.0,265.3 504.8,267.5C506.6,269.7 508.4,273.1 510.2,276.5C512.0,279.9 514.0,284.2 515.6,288.1C517.2,292.0 518.8,297.2 520.0,299.9C521.2,302.6 521.4,300.9 522.7,304.3C524.1,307.7 526.3,315.5 528.1,320.4C529.9,325.3 531.7,329.8 533.5,333.8C535.3,337.8 537.0,341.6 538.8,344.6C540.6,347.6 542.4,349.8 544.2,351.7C546.0,353.6 547.8,355.0 549.6,355.9C551.4,356.8 553.2,357.2 555.0,357.1C556.8,357.0 558.5,356.5 560.3,355.3C562.1,354.1 563.9,352.2 565.7,350.0C567.5,347.8 569.2,345.1 571.0,341.9C572.8,338.7 574.5,334.8 576.5,330.8C578.5,326.8 580.8,322.0 583.0,317.9C585.2,313.8 587.3,309.2 589.5,306.0C591.7,302.8 593.9,300.3 596.0,298.4C598.1,296.5 600.2,295.5 602.4,294.7C604.5,293.9 606.7,293.5 608.9,293.6C611.1,293.8 613.2,294.4 615.4,295.6C617.6,296.8 619.7,298.6 621.9,300.6C624.1,302.6 626.2,305.0 628.4,307.5C630.6,310.0 632.7,313.0 634.9,315.7C637.1,318.4 639.2,321.3 641.4,323.7C643.6,326.1 645.8,328.1 647.9,329.8C650.0,331.5 652.1,332.7 654.3,333.7C656.4,334.7 658.6,335.2 660.8,335.6C663.0,336.0 665.1,336.0 667.3,335.8C669.5,335.6 671.6,335.2 673.8,334.5C676.0,333.8 678.1,332.6 680.3,331.3C682.5,330.0 684.6,328.2 686.8,326.5C689.0,324.8 691.1,322.9 693.3,321.1C695.5,319.3 697.6,317.3 699.8,315.7C701.9,314.1 704.1,312.5 706.2,311.4C708.4,310.2 710.5,309.4 712.7,308.8C714.9,308.2 717.0,307.6 719.2,307.5C721.4,307.4 723.9,307.6 725.7,308.1C727.5,308.6 728.4,309.8 730.0,310.3C731.6,310.9 733.8,311.8 735.4,311.4C737.0,311.0 738.1,310.1 739.7,308.1C741.3,306.1 743.1,302.4 745.1,299.5C747.1,296.6 749.4,293.3 751.6,290.8C753.8,288.3 755.9,286.0 758.1,284.3C760.3,282.6 762.4,281.4 764.6,280.6C766.8,279.8 768.9,279.5 771.1,279.6C773.3,279.7 775.4,280.1 777.6,281.1C779.8,282.1 782.0,283.6 784.1,285.4C786.2,287.2 788.4,289.4 790.5,291.9C792.6,294.4 794.8,297.6 797.0,300.5C799.2,303.4 801.3,306.2 803.5,309.2C805.7,312.2 807.8,315.6 810.0,318.5C812.2,321.4 814.3,324.3 816.5,326.5C818.7,328.7 820.8,330.5 823.0,331.9C825.2,333.3 827.4,334.3 829.5,334.9C831.6,335.5 833.8,335.7 835.9,335.6C838.0,335.5 840.2,335.1 842.4,334.1C844.6,333.1 846.7,331.5 848.9,329.7C851.1,327.9 853.2,325.3 855.4,323.2C857.6,321.1 859.7,318.8 861.9,316.8C864.1,314.8 866.2,312.9 868.4,311.4C870.6,309.9 872.7,308.6 874.9,307.7C877.1,306.8 879.2,306.2 881.4,305.9C883.5,305.6 885.6,305.6 887.8,305.9C889.9,306.2 892.1,306.9 894.3,307.7C896.5,308.5 898.6,309.5 900.8,310.7C903.0,311.9 905.1,313.3 907.3,314.6C909.5,315.9 911.3,317.1 913.8,318.5C916.2,319.9 920.6,322.1 922.0,322.8" stroke="#1c8a30" stroke-width="1.75"/>
<path d="M259,319.3H277" stroke="#f0a060" stroke-width="1.2"/><path d="M277,319.2H324" stroke="#b8a838" stroke-width="1.2"/>
<path d="M259.0,311.0C260.3,311.0 270.6,310.9 272.0,311.0C273.4,311.1 272.6,311.7 273.5,311.8C274.4,311.9 280.1,311.7 281.0,311.8C281.9,311.9 281.4,312.6 282.5,312.7C283.6,312.8 290.9,312.6 292.0,312.7C293.1,312.8 292.7,313.6 293.5,313.7C294.3,313.8 299.2,313.6 300.0,313.7C300.8,313.8 300.3,314.4 301.5,314.5C302.7,314.6 310.8,314.4 312.0,314.5C313.2,314.6 312.5,315.1 313.5,315.2C314.5,315.3 321.0,315.1 322.0,315.2C323.0,315.3 322.0,315.9 323.5,316.0C325.0,316.1 335.5,315.9 337.0,316.0C338.5,316.1 336.7,316.8 338.5,316.9C340.3,317.0 353.1,317.0 355.0,317.1C356.9,317.2 354.5,317.6 357.0,317.7C359.5,317.8 375.7,318.0 380.0,318.1C384.3,318.2 395.8,318.3 400.0,318.4C404.2,318.5 420.2,318.7 422.5,318.7C422.6,320.5 423.1,332.6 423.4,336.5C423.7,340.4 424.8,354.1 425.2,358.0C425.6,361.9 427.3,372.8 427.9,375.9C428.5,379.0 430.7,387.2 431.5,389.3C432.3,391.4 434.9,395.6 435.9,396.5C436.9,397.4 439.9,398.6 441.3,398.8C442.7,399.0 448.2,399.4 449.4,398.8C450.6,398.2 452.2,394.0 452.9,392.9C453.6,391.8 455.6,388.5 456.5,387.5C457.4,386.5 460.8,383.7 461.9,383.0C463.0,382.3 466.3,381.2 467.3,380.4C468.3,379.6 470.7,376.3 471.7,375.0C472.7,373.7 476.1,368.9 477.1,367.8C478.1,366.7 480.6,364.8 481.6,364.3C482.6,363.8 486.0,363.2 487.0,362.5C488.0,361.8 490.4,358.2 491.4,357.1C492.4,356.0 495.8,352.3 496.8,351.7C497.8,351.1 500.3,351.1 501.3,350.8C502.3,350.5 505.5,349.7 506.6,349.0C507.7,348.3 510.9,344.5 512.0,343.7C513.1,342.9 516.3,341.3 517.4,341.0C518.5,340.7 521.6,341.4 522.7,341.0C523.8,340.6 527.0,338.0 528.1,337.4C529.2,336.8 532.4,335.0 533.5,334.7C534.6,334.4 537.7,334.5 538.8,334.4C539.9,334.3 543.1,334.2 544.2,333.8C545.3,333.4 548.5,331.3 549.6,330.8C550.7,330.3 553.9,329.1 555.0,329.0C556.1,328.9 559.2,330.4 560.3,330.3C561.4,330.2 564.6,328.1 565.7,327.6C566.8,327.1 569.9,325.7 571.0,325.4C572.1,325.1 575.3,324.2 576.5,324.4C577.7,324.6 581.7,327.3 583.0,327.2C584.3,327.1 588.2,323.9 589.5,323.7C590.8,323.5 594.7,324.9 596.0,325.0C597.3,325.1 601.1,325.3 602.4,325.0C603.7,324.7 607.4,322.3 608.9,322.2C610.4,322.1 615.9,323.8 617.6,323.7C619.3,323.6 624.5,320.8 626.2,320.7C627.9,320.6 632.9,322.9 634.9,322.8C636.9,322.7 643.8,319.7 645.7,319.6C647.6,319.5 652.3,321.9 654.3,321.8C656.2,321.7 663.2,319.0 665.2,318.9C667.2,318.8 671.9,321.1 673.8,321.1C675.7,321.1 682.6,318.5 684.6,318.5C686.6,318.5 691.6,321.1 693.3,321.1C695.0,321.1 700.0,318.5 701.9,318.5C703.8,318.5 710.8,320.7 712.7,320.7C714.7,320.7 719.7,318.6 721.4,318.5C723.1,318.4 728.7,320.0 730.0,320.2C731.3,320.4 733.9,320.2 734.3,320.2C734.5,319.9 735.6,318.3 736.0,317.5C736.4,316.7 737.7,314.1 738.6,312.4C739.5,310.7 743.8,302.8 745.1,300.5C746.4,298.2 750.3,291.6 751.6,289.7C752.9,287.8 756.8,282.5 758.1,281.1C759.4,279.7 763.3,276.7 764.6,275.7C765.9,274.7 769.8,271.7 771.1,270.9C772.4,270.1 776.3,267.9 777.6,267.5C778.9,267.1 782.8,266.5 784.1,266.6C785.4,266.7 789.0,268.0 790.5,268.1C792.0,268.2 797.7,267.8 799.2,268.1C800.7,268.4 804.4,270.8 805.7,271.4C807.0,272.0 810.9,274.1 812.2,274.6C813.5,275.1 817.3,276.2 818.6,276.8C819.9,277.4 823.8,280.4 825.1,281.1C826.4,281.9 830.3,283.7 831.6,284.3C832.9,284.9 836.8,287.1 838.1,287.6C839.4,288.1 843.3,289.2 844.6,289.7C845.9,290.2 849.8,292.5 851.1,293.0C852.4,293.5 856.3,294.7 857.6,295.1C858.9,295.5 862.7,297.0 864.0,297.3C865.3,297.6 869.2,298.0 870.5,298.4C871.8,298.8 875.7,300.8 877.0,301.2C878.3,301.6 882.2,302.5 883.5,302.7C884.8,302.9 888.7,303.1 890.0,303.4C891.3,303.7 895.2,305.5 896.5,305.9C897.8,306.3 901.7,306.8 903.0,307.0C904.3,307.2 908.2,307.4 909.5,307.7C910.8,308.0 914.6,309.5 915.9,309.8C917.1,310.1 921.4,310.6 922.0,310.7" stroke="#8c1c98" stroke-width="1.75"/>
<path d="M259.0,312.9C260.3,312.9 269.5,312.8 271.0,313.0C272.5,313.2 271.4,314.3 272.5,314.5C273.6,314.7 279.9,314.5 281.0,314.6C282.1,314.7 281.2,315.4 282.5,315.5C283.8,315.6 291.7,315.5 293.0,315.6C294.3,315.7 292.9,316.5 294.5,316.6C296.1,316.7 305.4,316.6 307.0,316.7C308.6,316.8 306.8,317.2 308.5,317.3C310.2,317.4 318.5,317.4 322.0,317.5C325.5,317.6 334.7,318.0 340.0,318.1C345.3,318.2 363.3,318.4 370.0,318.5C376.7,318.6 394.2,318.6 400.0,318.6C405.8,318.6 420.0,318.7 422.5,318.7C422.6,318.2 422.8,315.0 423.0,314.0C423.2,313.0 423.8,311.0 424.3,309.7C424.8,308.4 426.9,303.6 427.9,302.5C428.9,301.4 432.0,300.3 433.3,299.8C434.6,299.3 438.6,298.6 439.5,298.0C440.4,297.4 440.6,294.7 441.0,294.0C441.4,293.3 442.6,292.6 443.1,291.8C443.6,291.0 444.9,288.3 445.8,287.2C446.7,286.1 450.2,282.4 451.2,281.8C452.2,281.2 454.2,281.5 455.0,281.5C455.8,281.5 457.6,282.3 458.3,281.8C459.0,281.3 460.4,278.0 461.0,277.0C461.6,276.0 462.8,274.0 463.7,272.9C464.6,271.8 468.0,268.0 469.0,267.5C470.0,267.0 472.2,268.0 473.0,268.2C473.8,268.4 475.4,269.8 476.2,269.3C477.0,268.8 479.2,265.0 480.0,264.0C480.8,263.0 482.4,261.1 483.4,260.4C484.4,259.7 487.5,257.7 488.7,257.7C489.9,257.7 493.1,260.5 494.1,260.4C495.1,260.3 496.7,257.7 497.5,257.0C498.3,256.3 500.3,254.7 501.3,254.1C502.3,253.5 505.2,251.3 506.6,251.4C508.0,251.5 512.4,255.2 513.8,255.0C515.2,254.8 518.0,250.5 519.2,249.6C520.4,248.7 523.1,246.8 524.5,246.9C525.9,247.0 530.1,250.7 531.7,250.5C533.3,250.3 537.5,246.0 538.8,245.2C540.1,244.4 541.9,242.7 543.3,243.0C544.7,243.3 549.7,247.8 551.4,247.8C553.1,247.8 557.2,244.1 558.5,243.4C559.8,242.7 561.6,241.0 563.0,241.2C564.4,241.4 569.7,245.1 571.0,245.2C572.3,245.3 574.0,242.6 575.0,242.0C576.0,241.4 579.4,239.9 580.0,239.6C580.6,239.3 579.7,239.5 580.0,239.5C580.3,239.5 581.8,239.5 582.4,239.7C582.9,239.9 584.2,240.7 584.7,241.1C585.2,241.4 586.5,242.5 587.1,242.8C587.6,243.1 588.9,243.7 589.4,243.8C589.9,243.9 591.2,243.7 591.8,243.6C592.3,243.4 593.6,242.5 594.1,242.1C594.6,241.8 595.9,240.7 596.5,240.3C597.0,240.0 598.3,239.3 598.8,239.2C599.3,239.1 600.6,239.2 601.2,239.4C601.7,239.6 603.0,240.4 603.5,240.8C604.0,241.1 605.3,242.2 605.9,242.5C606.4,242.8 607.7,243.4 608.2,243.5C608.7,243.6 610.0,243.4 610.6,243.2C611.1,243.1 612.4,242.2 612.9,241.8C613.4,241.5 614.7,240.4 615.3,240.0C615.8,239.7 617.1,239.0 617.6,238.9C618.1,238.8 619.4,238.9 620.0,239.1C620.5,239.3 621.8,240.1 622.3,240.5C622.8,240.8 624.1,241.9 624.7,242.2C625.2,242.5 626.5,243.1 627.0,243.2C627.5,243.3 628.8,243.1 629.4,243.0C629.9,242.8 631.2,241.9 631.7,241.5C632.2,241.2 633.5,240.1 634.1,239.7C634.6,239.4 635.9,238.7 636.4,238.6C636.9,238.5 638.2,238.6 638.8,238.8C639.3,239.0 640.6,239.8 641.1,240.2C641.6,240.5 642.9,241.6 643.5,241.9C644.0,242.2 645.3,242.8 645.8,242.9C646.3,243.0 647.6,242.8 648.2,242.7C648.7,242.5 650.0,241.6 650.5,241.2C651.0,240.9 652.3,239.8 652.9,239.4C653.4,239.1 654.7,238.4 655.2,238.3C655.7,238.2 657.0,238.3 657.6,238.5C658.1,238.7 659.4,239.5 659.9,239.9C660.4,240.2 661.7,241.3 662.3,241.6C662.8,241.9 664.1,242.5 664.6,242.6C665.1,242.7 666.4,242.5 667.0,242.4C667.5,242.2 668.8,241.3 669.3,240.9C669.8,240.6 671.1,239.5 671.7,239.2C672.2,238.8 673.5,238.1 674.0,238.0C674.5,237.9 675.8,238.0 676.4,238.2C676.9,238.4 678.2,239.2 678.7,239.6C679.2,239.9 680.5,241.0 681.1,241.3C681.6,241.6 682.9,242.2 683.4,242.3C683.9,242.4 685.2,242.2 685.8,242.1C686.3,241.9 687.6,241.0 688.1,240.6C688.6,240.3 689.9,239.2 690.5,238.8C691.0,238.5 692.3,237.8 692.8,237.7C693.3,237.6 694.6,237.7 695.2,237.9C695.7,238.1 697.0,238.9 697.5,239.3C698.0,239.6 699.3,240.7 699.9,241.0C700.4,241.3 701.7,241.9 702.2,242.0C702.7,242.1 704.0,241.9 704.6,241.8C705.1,241.6 706.4,240.7 706.9,240.3C707.4,240.0 708.7,238.9 709.3,238.6C709.8,238.2 711.1,237.5 711.6,237.4C712.1,237.3 713.4,237.4 714.0,237.6C714.5,237.8 715.8,238.6 716.3,239.0C716.8,239.3 718.1,240.4 718.7,240.7C719.2,241.0 720.5,241.6 721.0,241.7C721.5,241.8 722.8,241.6 723.4,241.5C723.9,241.3 725.2,240.4 725.7,240.0C726.2,239.7 727.6,238.6 728.1,238.2C728.5,237.9 729.1,236.6 730.0,236.8C730.9,237.0 735.1,239.4 736.5,240.0C737.9,240.6 741.7,242.0 743.0,242.2C744.3,242.4 747.2,241.2 748.4,241.7C749.6,242.2 752.5,245.4 753.8,246.5C755.1,247.6 758.9,251.2 760.3,251.9C761.7,252.6 765.4,252.2 766.8,253.0C768.2,253.8 771.8,258.2 773.2,259.5C774.6,260.8 778.3,264.2 779.7,264.9C781.1,265.6 784.8,265.1 786.2,265.9C787.6,266.7 791.3,271.3 792.7,272.4C794.1,273.5 797.8,275.1 799.2,275.7C800.6,276.3 804.3,276.8 805.7,277.8C807.1,278.8 810.8,283.2 812.2,284.3C813.6,285.4 817.2,287.1 818.6,287.6C820.0,288.1 823.7,288.0 825.1,288.6C826.5,289.2 830.2,292.3 831.6,293.0C833.0,293.7 836.7,294.5 838.1,295.1C839.5,295.7 843.2,297.7 844.6,298.4C846.0,299.1 849.7,301.1 851.1,301.6C852.5,302.1 856.2,302.3 857.6,302.7C859.0,303.1 862.6,304.5 864.0,304.9C865.4,305.3 869.1,305.7 870.5,305.9C871.9,306.1 875.6,306.7 877.0,307.0C878.4,307.3 882.1,308.4 883.5,308.8C884.9,309.2 888.6,310.7 890.0,310.7C891.4,310.7 895.1,309.0 896.5,309.2C897.9,309.4 901.6,311.9 903.0,312.4C904.4,312.9 908.1,313.5 909.5,313.5C910.9,313.5 914.5,312.5 915.9,312.4C917.3,312.3 921.3,312.4 922.0,312.4" stroke="#1c8296" stroke-width="1.75"/>
<path d="M338,319.2L360,319.2L422.2,319.2" stroke="#117a58" stroke-width="2.2" stroke-linecap="butt"/>
<path d="M911.6,118.5V522" stroke="#5a5a5a" stroke-width="1.1" stroke-dasharray="7.5,5.4,2,5.4" stroke-dashoffset="1.2"/>
<path d="M911.6,300.8V327.3" stroke="#4a4a4a" stroke-width="1.1"/>
</g>
<path d="M541.5,285.4L528.1,301.8" stroke="#111" stroke-width="1.5" fill="none"/><path d="M522.4,308.8L525.0,299.3L531.2,304.4Z" fill="#111"/>
<path d="M488.7,400.0L476.2,383.6" stroke="#111" stroke-width="1.5" fill="none"/><path d="M470.8,376.4L479.4,381.2L473.1,386.0Z" fill="#111"/>
<path d="M825.0,245.4L811.4,262.2" stroke="#111" stroke-width="1.5" fill="none"/><path d="M805.7,269.2L808.3,259.7L814.5,264.7Z" fill="#111"/>
<path d="M826.2,290.8L813.0,307.2" stroke="#111" stroke-width="1.5" fill="none"/><path d="M807.4,314.2L809.9,304.7L816.2,309.7Z" fill="#111"/>
<path d="M421.5,554.5L421.5,528.5" stroke="#111" stroke-width="1.5" fill="none"/><path d="M421.5,521.2L425.2,528.5L417.8,528.5Z" fill="#111"/>
<path d="M738.1,552.6L738.1,526.5" stroke="#111" stroke-width="1.5" fill="none"/><path d="M738.1,519.2L742.0,526.5L734.2,526.5Z" fill="#111"/>
<g font-weight="bold" font-size="13.8">
<text x="542.6" y="283.5" fill="#1c8a1c">AC1</text>
<text x="489.4" y="413.8" fill="#7a0a8a">AC2</text>
<text x="825.2" y="242.2" fill="#7a0a8a">AC2</text>
<text x="825.8" y="287.6" fill="#1c8a1c">AC1</text>
</g>
<g font-weight="bold" font-size="17">
<text x="509" y="446.2" fill="#b0281c" textLength="223">50% Increase in Plant Delay</text>
<text x="499" y="465.3" fill="#111" textLength="239.5">Original Delay/Lag Ratio = <tspan fill="#b0281c">4.0</tspan></text>
</g>
<text x="475" y="94.8" font-size="17.7" text-anchor="middle" fill="#15181c">Deadtime CompensatorTest</text>
<text x="475.2" y="110" font-size="11.1" text-anchor="middle" fill="#2a3036">(Various Delay/Lag Ratios)</text>
<text x="15.5" y="553.2" font-size="10.7" fill="#1c2026">21 Tue Nov 2006</text>
</svg>

<div style="left:701px;top:553.7px;font-weight:bold;font-size:14px;color:#111"><span style="color:#b0201a">Slow</span> Upset</div>
<div style="left:384px;top:554.2px;font-weight:bold;font-size:14px;color:#111"><span style="color:#b0201a">Step</span> Upset</div>
<div style="left:667.5px;top:569.7px;font-weight:bold;font-size:13.9px;color:#111">Upset Lag <span style="font-family:'Liberation Serif',serif;font-weight:normal;font-size:15px;color:#333">= 2</span> <span style="font-size:19px;position:relative;top:4.5px;line-height:0">*</span> Delay</div>

<div class="ann g" style="top:596.7px">AC1 = standard PI</div>
<div class="ann g" style="top:616.9px">(Lambda = Lag and Reset = Lag)</div>
<div class="ann p" style="top:637.1px">AC2 = dead time compensated PI</div>
<div class="ann p" style="top:657.3px">(Lambda = Delay and Reset = Lag</div>
<div class="ann p" style="top:677.5px">but with controller Gain increased</div>
<div class="ann p" style="top:697.7px">and Reset decreased by factor of 2)</div>
</div>
</body></html>
